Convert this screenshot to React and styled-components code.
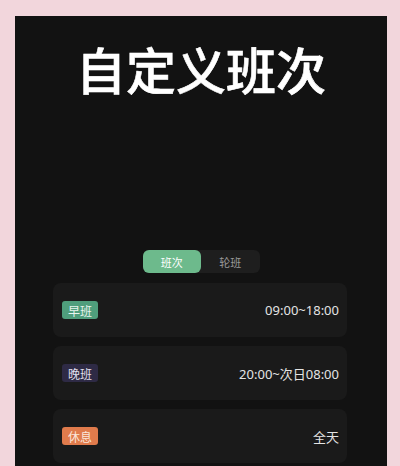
import React from 'react';
import styled, {createGlobalStyle} from 'styled-components';

const GlobalStyle = createGlobalStyle`
    html, body {
        margin: 0;
        padding: 0;
        background: #f2d6dc;
        overflow: hidden;
    }
    body {
        font-family: "Noto Sans CJK SC", "Noto Sans", sans-serif;
    }
`;

const Page = styled.div`
    padding: 16px 13px 0 15px;
    height: 466px;
    box-sizing: border-box;
    display: flex;
    flex-direction: column;
`;

const Panel = styled.div`
    background: #121212;
    flex: 1;
    display: flex;
    flex-direction: column;
    align-items: center;
    padding-top: 17px;
    box-sizing: border-box;
    overflow: hidden;
`;

const Title = styled.h1`
    margin: 0;
    color: #ffffff;
    font-size: 50px;
    font-weight: 500;
    line-height: 70px;
    -webkit-text-stroke: 0.6px #ffffff;
`;

const Tabs = styled.div`
    margin-top: 147px;
    display: flex;
    width: 117px;
    height: 23px;
    background: #1e1e1e;
    border-radius: 6px;
`;

const Tab = styled.div`
    flex: 1;
    display: flex;
    align-items: center;
    justify-content: center;
    font-size: 11px;
    border-radius: 6px;
    color: ${p => p.active ? '#ffffff' : '#9a9a9a'};
    background: ${p => p.active ? '#6dba8c' : 'transparent'};
`;

const List = styled.div`
    margin-top: 10px;
    display: flex;
    flex-direction: column;
    gap: 9px;
    width: 294px;
    margin-right: 2px;
`;

const Card = styled.div`
    flex-shrink: 0;
    height: 54px;
    background: #1a1a1a;
    border-radius: 8px;
    display: flex;
    align-items: center;
    justify-content: space-between;
    padding: 0 8px 0 9px;
`;

const Badge = styled.span`
    display: inline-flex;
    align-items: center;
    justify-content: center;
    height: 18px;
    padding: 0 6px;
    border-radius: 3px;
    font-size: 12px;
    color: ${p => p.fg};
    background: ${p => p.bg};
`;

const Time = styled.span`
    font-size: 13px;
    color: #e4e4e4;
    font-family: "Noto Sans", "Noto Sans CJK SC", sans-serif;
`;

const shifts = [
    {name: '早班', time: '09:00~18:00', bg: '#4f9e7c', fg: '#e8f5ee'},
    {name: '晚班', time: '20:00~次日08:00', bg: '#2e2a45', fg: '#e2e0ee'},
    {name: '休息', time: '全天', bg: '#e07b4c', fg: '#fbe6da'},
];

export default function App() {
    return (
        <Page>
            <GlobalStyle/>
            <Panel>
                <Title>自定义班次</Title>
                <Tabs>
                    <Tab active>班次</Tab>
                    <Tab>轮班</Tab>
                </Tabs>
                <List>
                    {shifts.map(s => (
                        <Card key={s.name}>
                            <Badge bg={s.bg} fg={s.fg}>{s.name}</Badge>
                            <Time>{s.time}</Time>
                        </Card>
                    ))}
                </List>
            </Panel>
        </Page>
    );
}
